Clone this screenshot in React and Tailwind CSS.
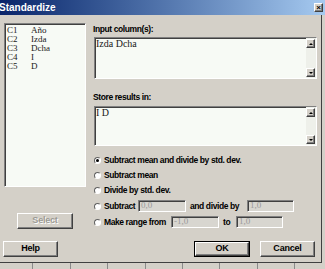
import React from 'react';

const ui = { fontFamily: "'Liberation Sans Narrow', 'Liberation Sans', Arial, sans-serif" };
const mono = { fontFamily: "'Liberation Serif', 'Times New Roman', serif" };

const sunken = "border border-t-[#808080] border-l-[#808080] border-r-white border-b-white shadow-[inset_1px_1px_0_#404040]";
const raised = "border border-t-white border-l-white border-r-[#404040] border-b-[#404040] shadow-[inset_-1px_-1px_0_#808080]";

const columns = [
  ['C1', 'Año'],
  ['C2', 'Izda'],
  ['C3', 'Dcha'],
  ['C4', 'I'],
  ['C5', 'D'],
];

function ScrollBox({ text, height }) {
  return (
    <div className={`flex w-[223px] bg-[#f7faf5] ${sunken} ${height}`}>
      <div className="flex-1 pl-[1px] pt-[1px] text-[10px] font-normal leading-[10px] tracking-normal text-[#202020]" style={mono}>
        {text}
      </div>
      <div className="flex w-[10px] flex-col justify-between bg-[#eef0ea] py-[1px] pr-[1px]">
        <div className={`flex h-[9px] w-[9px] items-center justify-center bg-[#d4d0c8] ${raised}`}>
          <div className="h-0 w-0 border-x-[2px] border-b-[2px] border-x-transparent border-b-black" />
        </div>
        <div className={`flex h-[9px] w-[9px] items-center justify-center bg-[#d4d0c8] ${raised}`}>
          <div className="h-0 w-0 border-x-[2px] border-t-[2px] border-x-transparent border-t-black" />
        </div>
      </div>
    </div>
  );
}

function Radio({ checked, children, className = 'h-[15px]' }) {
  return (
    <div className={`flex items-center whitespace-nowrap ${className}`}>
      <div className="ml-[1px] mr-[3px] flex h-[7px] w-[7px] shrink-0 items-center justify-center rounded-full border border-t-[#606060] border-l-[#606060] border-r-white border-b-white bg-white">
        {checked && <div className="h-[3px] w-[3px] rounded-full bg-black" />}
      </div>
      {children}
    </div>
  );
}

function Field({ value, width }) {
  return (
    <div
      className={`flex h-[12px] shrink-0 items-center bg-[#d8d6d0] pl-[2px] text-[9px] font-normal tracking-normal text-[#9a9a9a] ${sunken} ${width}`}
      style={mono}
    >
      {value}
    </div>
  );
}

function Button({ children, width, def, disabled }) {
  const inner = (
    <div
      className={`flex h-full w-full items-center justify-center bg-[#d4d0c8] text-[9px] font-bold tracking-[-0.2px] ${raised} ${
        disabled ? 'text-[#9c9a94] [text-shadow:1px_1px_0_#ffffff]' : 'text-black'
      }`}
    >
      {children}
    </div>
  );
  if (def) {
    return <div className={`border border-black ${width} h-[16px]`}>{inner}</div>;
  }
  return <div className={`${width} h-[16px]`}>{inner}</div>;
}

export default function App() {
  return (
    <div className="flex h-[269px] w-[325px] flex-col overflow-hidden bg-[#d4d0c8] text-black" style={ui}>
      {/* title bar */}
      <div className="flex h-[15px] w-[325px] items-center justify-between bg-gradient-to-r from-[#0a246a] to-[#a6caf0] pr-[2px]">
        <span className="-ml-[1px] text-[10px] font-bold leading-none text-white">Standardize</span>
        <div className={`flex h-[9px] w-[9px] items-center justify-center bg-[#d4d0c8] text-[8px] font-bold leading-none ${raised}`}>
          ×
        </div>
      </div>

      <div className="flex h-[248px] w-[322px] flex-col border-r border-b border-[#404040]">
        <div className="flex">
          {/* left column */}
          <div className="ml-[4px] flex w-[82px] flex-col">
            <div className={`mt-[8px] h-[164px] bg-[#f7faf5] pt-[2px] ${sunken}`}>
              {columns.map(([c, name]) => (
                <div key={c} className="flex h-[9px] items-center text-[9px] leading-[9px] text-[#202020]" style={mono}>
                  <span className="w-[26px] pl-[2px]">{c}</span>
                  <span>{name}</span>
                </div>
              ))}
            </div>
            <div className="ml-[13px] mt-[26px]">
              <Button width="w-[56px]" disabled>Select</Button>
            </div>
          </div>

          {/* right column */}
          <div className="ml-[7px] flex w-[224px] flex-col text-[8.5px] font-bold tracking-[-0.4px]">
            <div className="mt-[8px] h-[12px] leading-[12px]">Input column(s):</div>
            <div className="ml-[1px] mt-[2px]">
              <ScrollBox text="Izda Dcha" height="h-[42px]" />
            </div>
            <div className="mt-[12px] h-[12px] leading-[12px]">Store results in:</div>
            <div className="ml-[1px] mt-[3px]">
              <ScrollBox text="I D" height="h-[40px]" />
            </div>

            <div className="mt-[7px] flex flex-col">
              <Radio checked>Subtract mean and divide by std. dev.</Radio>
              <Radio>Subtract mean</Radio>
              <Radio>Divide by std. dev.</Radio>
              <Radio className="h-[16px]">
                <span className="w-[34px] shrink-0">Subtract</span>
                <Field value="0,0" width="w-[48px]" />
                <span className="ml-[4px] w-[57px] shrink-0">and divide by</span>
                <Field value="1,0" width="w-[47px]" />
              </Radio>
              <Radio className="h-[16px]">
                <span className="w-[67px] shrink-0">Make range from</span>
                <Field value="-1,0" width="w-[48px]" />
                <span className="ml-[4px] w-[13px] shrink-0">to</span>
                <Field value="1,0" width="w-[47px]" />
              </Radio>
            </div>
          </div>
        </div>

        {/* bottom buttons */}
        <div className="mt-[11px] flex">
          <div className="ml-[3px]">
            <Button width="w-[55px]">Help</Button>
          </div>
          <div className="ml-[136px]">
            <Button width="w-[56px]" def>OK</Button>
          </div>
          <div className="ml-[10px]">
            <Button width="w-[55px]">Cancel</Button>
          </div>
        </div>
      </div>

      {/* worksheet behind the dialog */}
      <div className="flex flex-1 bg-[#d4d0c8]">
        {[33, 38, 37, 38, 37, 37, 38, 37].map((w, i) => (
          <div key={i} className="border-r border-[#8a8a8a]" style={{ width: w }} />
        ))}
      </div>
    </div>
  );
}
